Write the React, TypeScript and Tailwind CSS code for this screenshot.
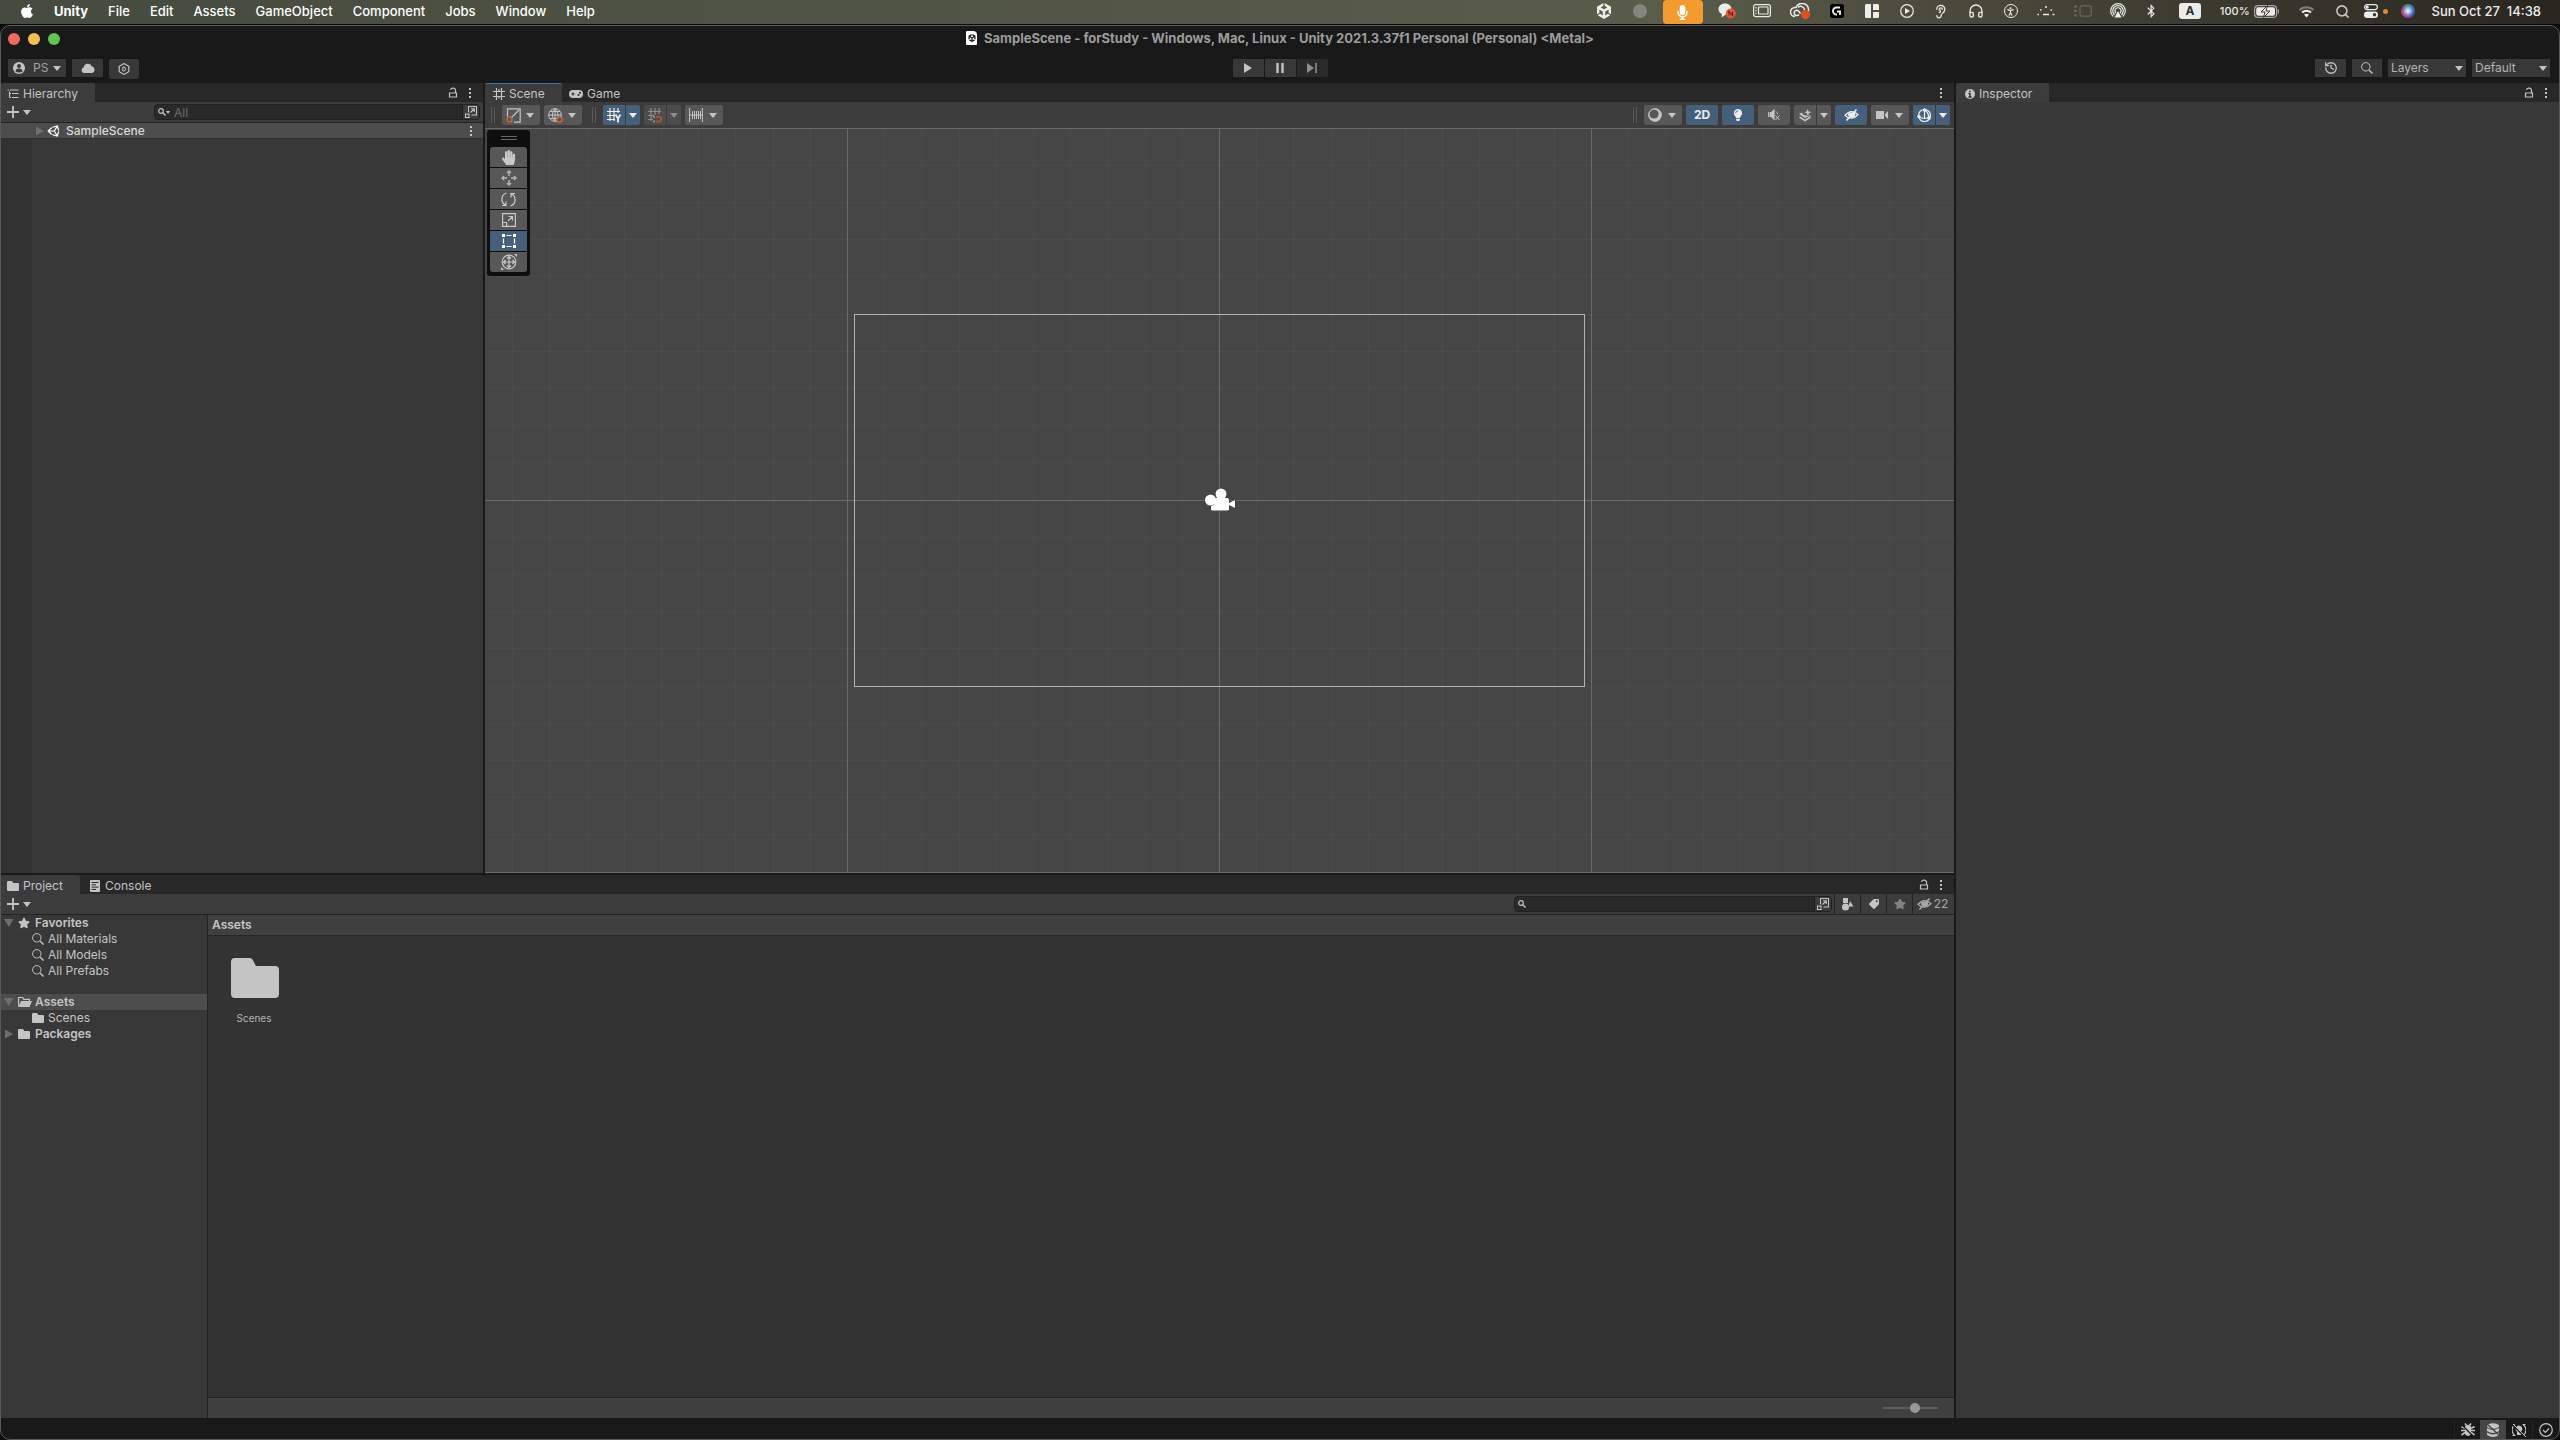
import React from 'react';
import { FaApple, FaBluetoothB, FaHandPaper, FaLightbulb, FaMicrophone, FaStar, FaTag, FaUnity } from 'react-icons/fa';
import { FaUnity as FaUnityCube } from 'react-icons/fa6';
import { Ear, Headphones, History, PersonStanding, Search } from 'lucide-react';

type SvgProps = { size?: number; h?: number; box?: string; className?: string; children: React.ReactNode };

const Svg = ({ size = 14, h, box = '0 0 14 14', className = '', children }: SvgProps) => (
  <svg
    width={size}
    height={h ?? size}
    viewBox={box}
    fill="none"
    stroke="currentColor"
    strokeWidth="1.2"
    className={`shrink-0 ${className}`}
    aria-hidden="true"
  >
    {children}
  </svg>
);

const Caret = ({ className = '' }: { className?: string }) => (
  <Svg size={8} h={5} box="0 0 8 5" className={className}>
    <path d="M0 0h8L4 5z" fill="currentColor" stroke="none" />
  </Svg>
);

const Foldout = ({ open = false }: { open?: boolean }) => (
  <Svg size={10} box="0 0 10 10" className="text-[#6e6e6e]">
    <path d={open ? 'M0 1h9.5L4.75 9z' : 'M1 0.5v9L9 5z'} fill="currentColor" stroke="none" />
  </Svg>
);

const LockIcon = () => (
  <Svg size={10} h={12} box="0 0 10 12">
    <path d="M1.5 6h7v4h-7zM7.5 6V3.5a2.5 2.2 0 0 0-5-0.5" />
  </Svg>
);

const DotsIcon = () => (
  <Svg size={4} h={12} box="0 0 4 12">
    <path d="M1 1h2v2H1zM1 5h2v2H1zM1 9h2v2H1z" fill="currentColor" stroke="none" />
  </Svg>
);

const HierarchyIcon = () => (
  <Svg size={12} box="0 0 12 12">
    <path d="M3 2h8.5M5 5.5h6.5M5 9.5h6.5M0.5 2h1.5M2.5 3.5v6M2.5 5.5h1.5M2.5 9.5h1.5" />
  </Svg>
);

const GridIcon = () => (
  <Svg size={12} box="0 0 12 12">
    <path d="M3.5 0v12M8.5 0v12M0 3.5h12M0 8.5h12M6 1v2.5M6 8.5v2" />
  </Svg>
);

const GamepadIcon = () => (
  <Svg size={14} h={10} box="0 0 14 10">
    <rect x="0" y="1" width="14" height="8" rx="4" fill="currentColor" stroke="none" />
    <path d="M2.5 5h3M4 3.5v3" stroke="#282828" />
    <circle cx="9.5" cy="6" r="1" fill="#282828" stroke="none" />
    <circle cx="11" cy="3.8" r="1" fill="#282828" stroke="none" />
  </Svg>
);

const InfoIcon = () => (
  <Svg size={10} box="0 0 10 10">
    <circle cx="5" cy="5" r="5" fill="currentColor" stroke="none" />
    <path d="M5 1.5v1.5M5 4v4M3.5 4.5H5M3.5 8h3" stroke="#282828" strokeWidth="1.3" />
  </Svg>
);

const FolderIcon = () => (
  <Svg size={12} h={10} box="0 0 12 10">
    <path d="M0 1.2Q0 0 1 0h4l1.3 2H11q1 0 1 1v6q0 1-1 1H1Q0 10 0 9z" fill="currentColor" stroke="none" />
  </Svg>
);

const FolderOpenIcon = () => (
  <Svg size={14} h={10} box="0 0 14 10">
    <path d="M0.6 9.5v-9h4l1.2 1.8h5.6V4" />
    <path d="M3 4h11l-2.5 6H0.5z" fill="currentColor" stroke="none" />
  </Svg>
);

const ConsoleIcon = () => (
  <Svg size={10} h={12} box="0 0 10 12">
    <rect width="10" height="12" rx="1" fill="currentColor" stroke="none" />
    <path d="M1.5 2.5h7M1.5 4.8h4.5M1.5 7.1h7M1.5 9.4h4.5" stroke="#282828" strokeWidth="1" />
  </Svg>
);

const LensIcon = () => (
  <Svg size={12} box="0 0 12 12">
    <circle cx="4.8" cy="4.8" r="4.2" strokeWidth="1" />
    <path d="M8 8l3.5 3.5" strokeWidth="1.5" />
  </Svg>
);

const SmallLensIcon = () => (
  <Svg size={8} box="0 0 8 8">
    <circle cx="3" cy="3" r="2.3" />
    <path d="M4.8 4.8L7.5 7.5" strokeWidth="1.4" />
  </Svg>
);

const PickerIcon = () => (
  <Svg size={12} box="0 0 12 12">
    <path d="M3.5 6.5v-6h8v8.5h-5M0.5 8h3.5v3.5H0.5zM5.5 6.5L9 3M6 2.8h3.2V6" strokeWidth="1.1" />
  </Svg>
);

const PlusIcon = () => (
  <Svg size={12} box="0 0 12 12">
    <path d="M6 0v12M0 6h12" strokeWidth="1.8" />
  </Svg>
);

const HiddenIcon = () => (
  <Svg size={15} h={12} box="0 0 15 12">
    <path d="M1 6.5Q7 -0.5 14 5.5Q8 12.5 1 6.5z" />
    <path d="M5 4.5a3 2.5 0 1 0 5-0.5z" fill="currentColor" />
    <path d="M2.5 11.5L12.5 0.5" strokeWidth="1.6" />
  </Svg>
);

/* ---------- macOS menu bar ---------- */

const menus = ['File', 'Edit', 'Assets', 'GameObject', 'Component', 'Jobs', 'Window', 'Help'];

const Slot = ({ w, children }: { w: string; children: React.ReactNode }) => (
  <span className={`flex h-full shrink-0 items-center justify-center ${w}`}>{children}</span>
);

const MenuBar = () => (
  <header className="flex h-6 shrink-0 items-center bg-linear-to-r from-[#454b3f] via-[#5a5c4b] via-65% to-[#29261f] pb-[2px] text-[13px] text-white">
    <nav className="flex items-center gap-5 pl-[19px] font-medium" aria-label="Application menu">
      <button aria-label="Apple menu" className="-mr-[5px] flex w-5">
        <FaApple className="size-4" />
      </button>
      <button className="font-bold">Unity</button>
      {menus.map((m) => (
        <button key={m}>{m}</button>
      ))}
    </nav>
    <div className="ml-auto flex h-full items-center pr-[19px] text-[#ececec]">
      <Slot w="w-9"><FaUnityCube className="size-4" /></Slot>
      <Slot w="w-9"><span className="size-[14px] rounded-full bg-[#85857b]" /></Slot>
      <span className="mr-[7px] -mb-[2px] ml-[5px] flex h-6 w-10 items-center justify-center rounded-[4px] bg-[#f29b2e] text-white">
        <FaMicrophone className="size-[15px]" />
      </span>
      <Slot w="w-[34px]">
        <Svg size={18} h={16} box="0 0 18 16">
          <path d="M7 0.5c4 0 6.5 2.5 6.5 5.5S11 11.5 7.5 11.7L3.5 14.5l0.3-3.5C1.5 10 0.5 8.2 0.5 6c0-3 2.5-5.5 6.5-5.5z" fill="currentColor" stroke="none" />
          <circle cx="12.8" cy="10.5" r="5" fill="#e2583a" stroke="none" />
          <path d="M11 12.5v-4l3.5 4v-4" stroke="#5b2418" strokeWidth="1.1" />
        </Svg>
      </Slot>
      <Slot w="w-9">
        <Svg size={18} h={14} box="0 0 18 14">
          <rect x="0.6" y="0.6" width="16.8" height="12" rx="2" />
          <rect x="5.5" y="3" width="9.5" height="7" rx="0.5" />
          <path d="M3 3v1.5M3 6v1.5M3 9v1" />
        </Svg>
      </Slot>
      <Slot w="w-10">
        <Svg size={20} h={16} box="0 0 20 16">
          <path d="M5 13.5a4.5 4.5 0 0 1 0-9h1a6.5 6.5 0 0 1 12.5 2v2M9 11.5a2.5 2.5 0 0 1-4 0.2a2.5 2.5 0 1 1 3.5-3.7l2 2.5M8 4.5a3.8 3.8 0 0 1 6.5 2.5" strokeWidth="1.5" />
          <circle cx="15.5" cy="11.5" r="4.5" fill="#e0521d" stroke="none" />
        </Svg>
      </Slot>
      <Slot w="w-[34px]">
        <Svg>
          <rect width="14" height="14" rx="2.5" fill="#000" stroke="none" />
          <path d="M10 3.5H6.5a3.5 3.5 0 0 0 0 7h0.5M7 7.5h3v3.5" strokeWidth="1.9" />
        </Svg>
      </Slot>
      <Slot w="w-9">
        <Svg>
          <path d="M0 1.5Q0 0 1.5 0H6v14H1.5Q0 14 0 12.5zM8 0h4.5Q14 0 14 1.5V6H8zM8 8h6v4.5q0 1.5-1.5 1.5H8z" fill="currentColor" stroke="none" />
        </Svg>
      </Slot>
      <Slot w="w-[34px]">
        <Svg>
          <circle cx="7" cy="7" r="6.3" />
          <path d="M5 4l5 3-5 3z" fill="currentColor" stroke="none" />
        </Svg>
      </Slot>
      <Slot w="w-[34px]"><Ear className="size-[15px]" strokeWidth={2} /></Slot>
      <Slot w="w-9"><Headphones className="size-[16px]" strokeWidth={2} /></Slot>
      <Slot w="w-[34px]">
        <span className="flex size-[14px] items-center justify-center rounded-full border border-current">
          <PersonStanding className="size-[11px]" strokeWidth={2.5} />
        </span>
      </Slot>
      <Slot w="w-9">
        <Svg size={18} h={10} box="0 0 18 10">
          <path d="M3 4h1.5M8 1h2M13.5 4H15M0.5 8.5h1.5M6 8.5h6M15.5 8.5h2" strokeWidth="1.6" />
        </Svg>
      </Slot>
      <Slot w="w-[38px]">
        <Svg size={18} h={12} box="0 0 18 12" className="text-[#6a6857]">
          <rect x="6" y="0.8" width="11.3" height="10.4" rx="2" />
          <path d="M0 1.5h3M0 6h3M0 10.5h3" strokeWidth="1.8" />
        </Svg>
      </Slot>
      <Slot w="w-8">
        <Svg size={16} box="0 0 16 16">
          <path d="M3.2 13.5a7.3 7.3 0 1 1 9.6 0M4.6 11.8a5.2 5.2 0 1 1 6.8 0M6 10a3 3 0 1 1 4 0" />
          <path d="M8 8l3.5 6.5h-7z" fill="currentColor" stroke="none" />
        </Svg>
      </Slot>
      <Slot w="w-[34px]"><FaBluetoothB className="size-[14px]" /></Slot>
      <Slot w="w-11">
        <span className="flex h-4 w-[22px] items-center justify-center rounded-[3px] bg-[#ececec] text-[12px] font-bold text-[#33322a]">A</span>
      </Slot>
      <span className="ml-2 text-[11px] font-medium">100%</span>
      <Svg size={26} h={13} box="0 0 26 13" className="ml-1">
        <rect x="0.6" y="0.6" width="22" height="11.8" rx="3.5" opacity="0.6" />
        <rect x="2.2" y="2.2" width="18.8" height="8.6" rx="2" fill="currentColor" stroke="none" />
        <path d="M13.5 0.5L7 7h4l-1.5 5.5L16 6h-4z" fill="#ececec" stroke="#3a382c" strokeWidth="1" />
        <path d="M24.3 4.5v4" opacity="0.6" />
      </Svg>
      <Svg size={17} h={13} box="0 0 17 13" className="ml-[18px]">
        <path d="M1.5 5a10 10 0 0 1 14 0" opacity="0.4" strokeWidth="2" />
        <path d="M4 7.5a6.5 6.5 0 0 1 9 0" strokeWidth="2" />
        <path d="M8.5 12.5L6 9.8a3.7 3.7 0 0 1 5 0z" fill="currentColor" stroke="none" />
      </Svg>
      <Search className="ml-5 size-[15px] text-[#c9c8c0]" strokeWidth={2.5} />
      <Svg size={14} box="0 0 14 14" className="ml-[14px]">
        <rect x="0.6" y="0.6" width="12.8" height="5" rx="2.5" />
        <circle cx="3.2" cy="3.1" r="1.6" fill="currentColor" stroke="none" />
        <rect x="0" y="7.5" width="14" height="6.5" rx="3.2" fill="currentColor" stroke="none" />
        <circle cx="10.5" cy="10.7" r="1.7" fill="#38362a" stroke="none" />
      </Svg>
      <span className="ml-[5px] size-[5px] rounded-full bg-[#e08c28]" />
      <span className="ml-[13px] size-[14px] rounded-full bg-[radial-gradient(circle_at_50%_50%,#fff_0%,#9fc4ee_25%,transparent_55%),conic-gradient(#3b9f8f,#3c6fc0,#3d56b0,#8d4bb4,#c9436d,#8c4a7c,#3b9f8f)]" />
      <span className="ml-[17px] font-medium whitespace-pre">Sun Oct 27  14:38</span>
    </div>
  </header>
);

/* ---------- window title + main toolbar ---------- */

const TitleBar = () => (
  <div className="relative flex h-[26px] shrink-0 items-center justify-center">
    <div className="absolute left-[7px] flex gap-2">
      <button aria-label="Close" className="size-3 rounded-full bg-[#ed6a5e]" />
      <button aria-label="Minimize" className="size-3 rounded-full bg-[#f5bf4f]" />
      <button aria-label="Zoom" className="size-3 rounded-full bg-[#61c554]" />
    </div>
    <h1 className="flex items-center gap-[7px] pb-[2px] text-[13px] font-bold text-[#9c9c9c]">
      <span className="flex h-[14px] w-[11px] items-center justify-center rounded-[1px] rounded-tr-[4px] bg-white text-[#191919]">
        <FaUnityCube className="size-2" />
      </span>
      SampleScene - forStudy - Windows, Mac, Linux - Unity 2021.3.37f1 Personal (Personal) &lt;Metal&gt;
    </h1>
  </div>
);

const ToolbarSelect = ({ label }: { label: string }) => (
  <div className="relative flex h-[18px] w-[78px] items-center bg-[#383838]">
    <select aria-label={label} className="h-full w-full appearance-none bg-transparent pl-[3px] text-[#b4b4b4]">
      <option>{label}</option>
    </select>
    <Caret className="pointer-events-none absolute right-[3px]" />
  </div>
);

const MainToolbar = () => (
  <div className="grid h-[31px] shrink-0 grid-cols-3 items-start px-[7px] pt-[7px] text-[#c4c4c4]">
    <div className="flex items-start gap-[6px]">
      <button className="flex h-[18px] w-[58px] items-center bg-[#383838] px-[5px]">
        <Svg size={12} box="0 0 12 12">
          <circle cx="6" cy="6" r="6" fill="currentColor" stroke="none" />
          <circle cx="6" cy="4" r="2" fill="#383838" stroke="none" />
          <path d="M2.5 9.5q0-3 3.5-3t3.5 3q-3.5 2-7 0z" fill="#383838" stroke="none" />
        </Svg>
        <span className="ml-2 text-[#a4a4a4]">PS</span>
        <Caret className="ml-auto" />
      </button>
      <button aria-label="Cloud" className="flex h-[18px] w-[31px] items-center justify-center bg-[#383838]">
        <Svg size={14} h={10} box="0 0 14 10">
          <path d="M3 10a2.8 2.8 0 0 1-0.3-5.5a4.2 4.2 0 0 1 8-1.3A3.5 3.5 0 0 1 11 10z" fill="currentColor" stroke="none" />
        </Svg>
      </button>
      <button aria-label="DevOps" className="flex h-5 w-[30px] items-center justify-center rounded-[2px] bg-[#383838]">
        <Svg size={12} box="0 0 12 12">
          <path d="M6 0.6l4.8 2.7v5.4L6 11.4 1.2 8.7V3.3z" />
          <path d="M4.8 4v4h1q1.7 0 1.7-2T5.8 4z" strokeWidth="1" />
        </Svg>
      </button>
    </div>
    <div className="flex justify-center gap-px">
      <button aria-label="Play" className="flex h-[18px] w-[31px] items-center justify-center bg-[#383838]">
        <Svg size={8} h={10} box="0 0 8 10"><path d="M0 0l8 5-8 5z" fill="currentColor" stroke="none" /></Svg>
      </button>
      <button aria-label="Pause" className="flex h-[18px] w-[31px] items-center justify-center bg-[#383838]">
        <Svg size={8} h={10} box="0 0 8 10"><path d="M1.5 0v10M6.5 0v10" strokeWidth="2.4" /></Svg>
      </button>
      <button aria-label="Step" className="flex h-[18px] w-[31px] items-center justify-center bg-[#2a2a2a] text-[#8f8f8f]">
        <Svg size={10} box="0 0 10 10">
          <path d="M0 0l7 5-7 5z" fill="currentColor" stroke="none" />
          <path d="M9 0v10" strokeWidth="1.6" />
        </Svg>
      </button>
    </div>
    <div className="flex justify-end gap-[6px] pr-[2px]">
      <button aria-label="Undo history" className="flex h-[18px] w-[31px] items-center justify-center bg-[#383838]">
        <History className="size-[14px]" strokeWidth={2.2} />
      </button>
      <button aria-label="Search" className="flex h-[18px] w-[30px] items-center justify-center bg-[#383838]">
        <LensIcon />
      </button>
      <ToolbarSelect label="Layers" />
      <ToolbarSelect label="Default" />
    </div>
  </div>
);

/* ---------- dock panels ---------- */

type TabProps = { icon: React.ReactNode; label: string; active?: boolean; focused?: boolean; className?: string };

const Tab = ({ icon, label, active, focused, className = 'pl-[7px]' }: TabProps) => (
  <button
    role="tab"
    aria-selected={!!active}
    className={`flex h-[19px] items-center gap-1 rounded-t-[2px] border-t pt-px ${
      active ? 'bg-[#3c3c3c]' : 'bg-transparent'
    } ${focused ? 'border-[#3a72b0]' : 'border-transparent'} ${className}`}
  >
    {icon}
    {label}
  </button>
);

const TabBar = ({ lock, children }: { lock?: boolean; children: React.ReactNode }) => (
  <div className="flex h-[19px] shrink-0 items-center bg-[#282828] pr-[11px]">
    <div role="tablist" className="flex">{children}</div>
    <div className="ml-auto flex items-center gap-[10px]">
      {lock && <button aria-label="Lock"><LockIcon /></button>}
      <button aria-label="Panel menu"><DotsIcon /></button>
    </div>
  </div>
);

const SearchBox = ({ label, hint, className, caret }: { label: string; hint?: string; className: string; caret?: boolean }) => (
  <div className={`flex h-4 items-center rounded-[4px] border border-[#212121] bg-[#2a2a2a] pl-[3px] ${className}`}>
    <SmallLensIcon />
    {caret && (
      <Svg size={4} h={3} box="0 0 4 3">
        <path d="M0 0h4L2 3z" fill="currentColor" stroke="none" />
      </Svg>
    )}
    <input aria-label={label} placeholder={hint} className="ml-1 h-full min-w-0 flex-1 bg-transparent outline-none placeholder:text-[#6c6c6c]" />
    <button aria-label="Open search window" className="flex h-full w-[17px] items-center justify-center rounded-r-[3px] border-l border-[#212121] bg-[#3c3c3c]">
      <PickerIcon />
    </button>
  </div>
);

const Hierarchy = () => (
  <section aria-label="Hierarchy" className="flex min-h-0 min-w-0 flex-col bg-[#383838]">
    <TabBar lock>
      <Tab active icon={<HierarchyIcon />} label="Hierarchy" className="w-[94px] pl-[6px]" />
    </TabBar>
    <div className="flex h-[21px] shrink-0 items-center border-b border-[#232323] bg-[#3c3c3c] pr-[3px] pl-[6px]">
      <button aria-label="Create" className="flex items-center gap-1"><PlusIcon /><Caret /></button>
      <SearchBox label="Search hierarchy" hint="All" caret className="ml-auto w-[326px]" />
    </div>
    <div className="flex h-4 shrink-0 items-center border-b border-[#303030] bg-[#4d4d4d] pr-[10px] pl-[34px]">
      <Foldout />
      <FaUnity className="ml-[2px] size-[14px] text-white" />
      <span className="ml-[5px] font-medium text-[#d8d8d8]">SampleScene</span>
      <button aria-label="Scene options" className="ml-auto"><DotsIcon /></button>
    </div>
    <div className="w-[31px] flex-1 bg-[#313131]" />
  </section>
);

const Grip = ({ className = '' }: { className?: string }) => (
  <span className={`h-4 w-1 shrink-0 border-x border-[#5a5a5a] ${className}`} />
);

type ToolProps = { label: string; on?: boolean; dim?: boolean; caret?: boolean; split?: boolean; children: React.ReactNode };

const ToolButton = ({ label, on, dim, caret, split, children }: ToolProps) => {
  const tone = `${on ? 'bg-[#46607c] text-[#eee]' : 'bg-[#585858] text-[#c4c4c4]'} ${dim ? 'opacity-60' : ''}`;
  if (split) {
    return (
      <div className="flex gap-px">
        <button aria-label={label} className={`flex h-5 w-[22px] items-center justify-center rounded-l-[2px] ${tone}`}>{children}</button>
        <button aria-label={`${label} options`} className={`flex h-5 w-[14px] items-center justify-center rounded-r-[2px] ${tone}`}><Caret /></button>
      </div>
    );
  }
  return (
    <button aria-label={label} className={`flex h-5 items-center rounded-[2px] ${caret ? 'w-[38px] justify-between pr-[6px] pl-1' : 'w-8 justify-center'} ${tone}`}>
      {children}
      {caret && <Caret />}
    </button>
  );
};

const SceneToolbar = () => (
  <div className="flex h-[27px] shrink-0 items-center gap-1 border-b border-[#6a6a6a] bg-[#3c3c3c] pr-1 pl-[6px]">
    <Grip className="mr-[3px]" />
    <ToolButton label="Tool handle position" caret>
      <Svg size={15} box="0 0 15 15">
        <path d="M1.5 8.5V0.8h12.7v13.4H8M5.5 9.5L13 2" />
        <circle cx="3.5" cy="11.5" r="2.6" stroke="#d9673a" />
      </Svg>
    </ToolButton>
    <ToolButton label="Tool handle rotation" caret>
      <Svg size={15} box="0 0 15 15">
        <circle cx="7" cy="7" r="6.3" strokeWidth="1" />
        <path d="M7 0.7v12.6M0.7 7h12.6M2 3.5h10M2 10.5h7M7 0.7Q1.5 7 7 13.3M7 0.7Q11 5 10 9" strokeWidth="1" />
        <circle cx="11.5" cy="11.5" r="2.6" stroke="#d9673a" fill="#585858" />
      </Svg>
    </ToolButton>
    <Grip className="mr-[3px] ml-[6px]" />
    <ToolButton label="Grid visibility" on split>
      <Svg size={15} box="0 0 15 15">
        <path d="M3 0v13M7 0v13M11 0v5M0 3.5h13M0 7.5h8M0 11.5h8" />
        <path d="M8.5 6.5l2.5 4v4M13.5 6.5L11 10.5" strokeWidth="1.8" />
      </Svg>
    </ToolButton>
    <ToolButton label="Grid snapping" dim split>
      <Svg size={15} box="0 0 15 15">
        <path d="M3 0v13M7 0v7M11 0v6M0 3.5h13M0 7.5h6M0 11.5h5" />
        <path d="M8 9h3a2 2 0 0 1 0 4.5H8" stroke="#d9673a" strokeWidth="2" />
        <path d="M5 9h2M5 13.5h2" strokeWidth="2" />
      </Svg>
    </ToolButton>
    <ToolButton label="Snap increment" caret>
      <Svg size={14}>
        <path d="M0.6 0v14M13.4 0v14M3.5 3v8M5.5 3v8M7.5 3v8M9.5 3v8M11.5 3v8M0.6 7h12.8" strokeWidth="1" />
      </Svg>
    </ToolButton>
    <div className="ml-auto flex items-center gap-1">
      <Grip className="mr-[3px]" />
      <ToolButton label="Draw mode" caret>
        <Svg>
          <path d="M7 0.5a6.5 6.5 0 1 0 0 13a6.5 6.5 0 1 0 0-13z" fill="currentColor" stroke="none" />
          <circle cx="6" cy="6" r="4.6" fill="#585858" stroke="none" />
          <circle cx="7" cy="7" r="6.3" strokeWidth="1" />
        </Svg>
      </ToolButton>
      <ToolButton label="2D mode" on><span className="font-bold">2D</span></ToolButton>
      <ToolButton label="Scene lighting" on><FaLightbulb className="size-3" /></ToolButton>
      <ToolButton label="Scene audio">
        <Svg size={12} box="0 0 12 12">
          <path d="M0.7 3v5M2.5 3v5M3 4.5L6 1v9L3 7z" fill="currentColor" />
          <path d="M7.5 6.5l4 4.5M11.5 6.5l-4 4.5M8 2.5q1.5 1 1.5 3" strokeWidth="1" />
        </Svg>
      </ToolButton>
      <ToolButton label="Effects" split>
        <Svg size={13} box="0 0 13 13">
          <path d="M0 5l3-1.5 1.5 2.5L9 7l2.5-1L12 6.5 6 9z" fill="currentColor" stroke="none" />
          <path d="M0.5 8L6 11.5 11.5 8" strokeWidth="1.5" />
          <path d="M8.5 0l1 2.5L12.5 3l-2.5 1.2L9 7 7.5 4 5 3l2.7-0.5z" fill="currentColor" stroke="none" />
        </Svg>
      </ToolButton>
      <ToolButton label="Scene visibility" on><HiddenIcon /></ToolButton>
      <ToolButton label="Scene camera" caret>
        <Svg size={14} h={10} box="0 0 14 10">
          <path d="M1 1h8v8H1zM10 4l3-3v8l-3-3z" fill="currentColor" stroke="none" />
        </Svg>
      </ToolButton>
      <ToolButton label="Gizmos" on split>
        <Svg size={15} box="0 0 15 15">
          <circle cx="7.5" cy="7.5" r="6" />
          <path d="M7.5 2v8.5M1.5 8.5q6 4 12 0M7.5 2q5 3 4 9" />
          <circle cx="7.5" cy="2" r="1.7" fill="currentColor" stroke="none" />
          <circle cx="2" cy="8.5" r="1.7" fill="currentColor" stroke="none" />
          <circle cx="12" cy="10" r="1.7" fill="currentColor" stroke="none" />
        </Svg>
      </ToolButton>
    </div>
  </div>
);

const sceneTools = [
  { label: 'View tool', icon: <FaHandPaper className="size-[15px]" /> },
  {
    label: 'Move tool',
    icon: (
      <Svg size={16} box="0 0 16 16" className="text-[#b4b4b4]">
        <path d="M8 6V1M8 10V15M6 8H1M10 8H15M6 3l2-2 2 2M6 13l2 2 2-2M3 6L1 8l2 2M13 6l2 2-2 2" strokeWidth="1.4" />
      </Svg>
    ),
  },
  {
    label: 'Rotate tool',
    icon: (
      <Svg size={15} box="0 0 15 15">
        <path d="M5.5 1A6.5 6.5 0 0 0 4.5 13M9.5 14A6.5 6.5 0 0 0 10.5 2M1 13.5h4V9.5M14 1.5h-4V5.5" />
      </Svg>
    ),
  },
  {
    label: 'Scale tool',
    icon: (
      <Svg size={14}>
        <path d="M0.6 0.6h12.8v12.8H0.6zM0.6 9.5h4v4M6 8l4.5-4.5M6.5 3.5h4v4" />
      </Svg>
    ),
  },
  {
    label: 'Rect tool',
    icon: (
      <Svg size={14}>
        <path d="M4.5 1.5h5M4.5 12.5h5M1.5 4.5v5M12.5 4.5v5" />
        <path d="M0 0h3v3H0zM11 0h3v3h-3zM0 11h3v3H0zM11 11h3v3h-3z" fill="currentColor" stroke="none" />
      </Svg>
    ),
  },
  {
    label: 'Transform tool',
    icon: (
      <Svg size={16} box="0 0 16 16">
        <circle cx="8" cy="8" r="6.8" />
        <path d="M8 2.5v11M2.5 8h11M6 4.5L8 2.5l2 2M6 11.5l2 2 2-2M4.5 6l-2 2 2 2M11.5 6l2 2-2 2" />
        <path d="M13 0h3v3zM0 13v3h3z" fill="currentColor" stroke="none" />
      </Svg>
    ),
  },
];

const ToolPalette = () => (
  <div role="toolbar" aria-label="Tools" className="absolute top-[1px] left-[2px] flex w-[43px] flex-col items-center gap-px rounded-[3px] bg-[#0e0e0e] pb-1">
    <span className="my-[6px] h-1 w-4 border-y border-[#666]" />
    {sceneTools.map((t) => (
      <button
        key={t.label}
        aria-label={t.label}
        className={`flex h-5 w-[37px] items-center justify-center first-of-type:rounded-t-[3px] last-of-type:rounded-b-[3px] ${
          t.label === 'Rect tool' ? 'bg-[#46607c] text-white' : 'bg-[#585858] text-[#c8c8c8]'
        }`}
      >
        {t.icon}
      </button>
    ))}
  </div>
);

// Grid cell of the 2D view; every tenth line from the origin is a major one
const CELL = 37.2;
const LINES = Array.from({ length: 81 }, (_, i) => i - 40);
const MAJOR = [-20, -10, 0, 10, 20];

const SceneView = () => (
  <div className="relative min-h-0 flex-1 overflow-hidden bg-[#464646]">
    <svg className="absolute inset-0 h-full w-full" aria-hidden="true">
      <svg x="50%" y="50%" overflow="visible">
        <g shapeRendering="crispEdges" transform="translate(0 -1)">
          {LINES.map((i) => (
            <path key={i} d={`M${i * CELL} -1000V1000M-1500 ${i * CELL}H1500`} stroke="#4b4b4b" />
          ))}
          {MAJOR.map((i) => (
            <path key={i} d={`M${i * CELL} -1000V1000M-1500 ${i * CELL}H1500`} stroke="#6b6b6b" />
          ))}
          <rect x="-365" y="-186" width="730" height="372" fill="none" stroke="#b4b4b4" />
        </g>
        <g fill="#fff" stroke="#333" strokeWidth="1" paintOrder="stroke" transform="translate(0 -1)">
          <path d="M-8 -2H8Q9.5 -2 9.5 0V9.5Q9.5 10.5 8.5 10.5H-7.5Q-8.5 10.5 -8.5 9.5zM9.5 3L15.5 0V8L9.5 5z" />
          <circle cx="-9" cy="0" r="5.5" />
          <circle cx="1.5" cy="-6" r="5.5" />
          <path d="M-8 -2H8V4H-8z" stroke="none" />
        </g>
      </svg>
    </svg>
    <ToolPalette />
  </div>
);

const Scene = () => (
  <section aria-label="Scene" className="flex min-h-0 min-w-0 flex-col">
    <TabBar>
      <Tab active focused icon={<GridIcon />} label="Scene" className="w-[77px] pl-2" />
      <Tab icon={<GamepadIcon />} label="Game" />
    </TabBar>
    <SceneToolbar />
    <SceneView />
  </section>
);

type RowProps = { icon: React.ReactNode; label: string; fold?: 'open' | 'closed'; selected?: boolean; className?: string };

const TreeRow = ({ icon, label, fold, selected, className = '' }: RowProps) => (
  <li
    className={`flex h-4 items-center ${fold ? 'pl-[3px] font-semibold' : 'pl-[31px]'} ${
      selected ? 'bg-[#4d4d4d]' : ''
    } ${className}`}
  >
    {fold && <Foldout open={fold === 'open'} />}
    <span className={`flex w-4 ${fold ? 'ml-1' : ''}`}>{icon}</span>
    <span className={fold ? 'ml-px' : ''}>{label}</span>
  </li>
);

const FilterButton = ({ label, className = 'w-[26px]', children }: { label: string; className?: string; children: React.ReactNode }) => (
  <button aria-label={label} className={`flex h-full items-center justify-center border-l border-[#232323] ${className}`}>
    {children}
  </button>
);

const Project = () => (
  <section aria-label="Project" className="flex min-h-0 min-w-0 flex-col">
    <TabBar lock>
      <Tab active icon={<FolderIcon />} label="Project" className="w-[79px] pl-[6px]" />
      <Tab icon={<ConsoleIcon />} label="Console" className="gap-[5px] pl-[10px]" />
    </TabBar>
    <div className="flex h-[21px] shrink-0 items-center border-b border-[#232323] bg-[#3c3c3c] pl-[6px]">
      <button aria-label="Create asset" className="flex items-center gap-1"><PlusIcon /><Caret /></button>
      <SearchBox label="Search project" className="mr-[2px] ml-auto w-[318px]" />
      <FilterButton label="Search by type">
        <Svg size={12} h={13} box="0 0 12 13">
          <path d="M1 0h5v5H1zM8 3l3.5 5.5h-5z" fill="currentColor" stroke="none" />
          <circle cx="3.5" cy="9" r="3.5" fill="currentColor" stroke="none" />
        </Svg>
      </FilterButton>
      <FilterButton label="Search by label"><FaTag className="size-[10px] -scale-x-100" /></FilterButton>
      <FilterButton label="Save search"><FaStar className="size-3 text-[#838383]" /></FilterButton>
      <FilterButton label="Hidden packages" className="w-[42px] gap-[2px] pr-[2px] text-[#a8a8a8]"><HiddenIcon />22</FilterButton>
    </div>
    <div className="flex min-h-0 flex-1">
      <ul className="w-[207px] shrink-0 border-r border-[#232323] bg-[#383838]">
        <TreeRow fold="open" icon={<FaStar className="size-3" />} label="Favorites" />
        <TreeRow icon={<LensIcon />} label="All Materials" />
        <TreeRow icon={<LensIcon />} label="All Models" />
        <TreeRow icon={<LensIcon />} label="All Prefabs" />
        <TreeRow fold="open" selected icon={<FolderOpenIcon />} label="Assets" className="mt-[15px]" />
        <TreeRow icon={<FolderIcon />} label="Scenes" />
        <TreeRow fold="closed" icon={<FolderIcon />} label="Packages" />
      </ul>
      <div className="flex min-w-0 flex-1 flex-col bg-[#333333]">
        <h2 className="flex h-[21px] shrink-0 items-center border-b border-[#272727] bg-[#404040] pl-1 font-semibold">Assets</h2>
        <div className="flex-1 px-[22px] pt-[22px]">
          <button className="flex w-[50px] flex-col items-center text-[10px]">
            <Svg size={48} h={40} box="0 0 48 40">
              <path d="M0 4q0-4 4-4h15q1.5 0 2.5 1.5L25 8h19q4 0 4 4v24q0 4-4 4H4q-4 0-4-4z" fill="currentColor" stroke="none" />
            </Svg>
            <span className="mt-[13px] pr-[2px] leading-[14px] text-[#b4b4b4]">Scenes</span>
          </button>
        </div>
        <div className="flex h-[21px] shrink-0 items-center justify-end border-t border-[#232323] bg-[#404040] pr-4">
          <input
            type="range"
            aria-label="Icon size"
            defaultValue={60}
            className="h-[10px] w-[55px] appearance-none bg-transparent [&::-webkit-slider-runnable-track]:h-[2px] [&::-webkit-slider-runnable-track]:bg-[#5e5e5e] [&::-webkit-slider-thumb]:-mt-1 [&::-webkit-slider-thumb]:size-[10px] [&::-webkit-slider-thumb]:appearance-none [&::-webkit-slider-thumb]:rounded-full [&::-webkit-slider-thumb]:bg-[#999999]"
          />
        </div>
      </div>
    </div>
  </section>
);

const Inspector = () => (
  <section aria-label="Inspector" className="flex min-h-0 min-w-0 flex-col bg-[#383838]">
    <TabBar lock>
      <Tab active icon={<InfoIcon />} label="Inspector" className="w-[93px] pl-[9px]" />
    </TabBar>
  </section>
);

const StatusBar = () => (
  <footer className="flex h-[21px] shrink-0 items-end justify-end pr-px text-[#c4c4c4]">
    <button aria-label="Debugger" className="flex h-[19px] w-[26px] items-center justify-center border-l border-[#232323]">
      <Svg>
        <path d="M4 3.5Q7 0 10 3.5V11Q7 15 4 11z" fill="currentColor" stroke="none" />
        <path d="M0.5 3.5L4 5.5M13.5 3.5L10 5.5M0 7.5h14M0.5 12L4 9.5M13.5 12L10 9.5M4 0.5l1.5 2M10 0.5L8.5 2.5" strokeWidth="1.6" />
        <path d="M0 1L13 14" stroke="#191919" strokeWidth="1.3" />
      </Svg>
    </button>
    <button aria-label="Cache server" className="flex h-[19px] w-[26px] items-center justify-center bg-[#464646]">
      <Svg>
        <ellipse cx="7" cy="3" rx="6" ry="2.8" fill="currentColor" stroke="none" />
        <path d="M1 5q6 4 12 0v3q-6 4-12 0zM1 9.5q6 4 12 0v2.5q-6 4-12 0z" fill="currentColor" stroke="none" />
        <path d="M1 1L14 13" stroke="#464646" strokeWidth="1.3" />
      </Svg>
    </button>
    <button aria-label="Auto lighting" className="flex h-[19px] w-[26px] items-center justify-center">
      <Svg>
        <path d="M7 2.5a3.5 3.5 0 0 1 2 6.3V12H5V8.8a3.5 3.5 0 0 1 2-6.3z" fill="currentColor" stroke="none" />
        <path d="M3 1.5A6.5 6.5 0 0 0 2.5 12M11 1.5A6.5 6.5 0 0 1 11.5 12M0.5 12.5h3M13.5 1.5h-3" />
        <path d="M0 1L13 14" stroke="#191919" strokeWidth="1.8" />
        <path d="M1 1L14 14" strokeWidth="1" />
      </Svg>
    </button>
    <button aria-label="Background tasks" className="flex h-[19px] w-[26px] items-center justify-center border-l border-[#232323]">
      <Svg>
        <circle cx="7" cy="7" r="6.3" />
        <path d="M4 7l2.3 2.3L10 5.5" />
      </Svg>
    </button>
  </footer>
);

export default function App() {
  return (
    <div className="flex h-screen flex-col bg-[#0c0c0c] font-['Inter',sans-serif] text-[12px] leading-4 text-[#c4c4c4]">
      <MenuBar />
      <main className="mt-px flex min-h-0 flex-1 flex-col overflow-hidden rounded-[10px] border border-[#5a5a5a] bg-[#191919]">
        <TitleBar />
        <MainToolbar />
        <div className="grid min-h-0 flex-1 grid-cols-[1953fr_603fr] gap-[2px]">
          <div className="grid min-h-0 grid-rows-[790fr_543fr] gap-[2px]">
            <div className="grid min-h-0 grid-cols-[482fr_1469fr] gap-[2px]">
              <Hierarchy />
              <Scene />
            </div>
            <Project />
          </div>
          <Inspector />
        </div>
        <StatusBar />
      </main>
    </div>
  );
}
